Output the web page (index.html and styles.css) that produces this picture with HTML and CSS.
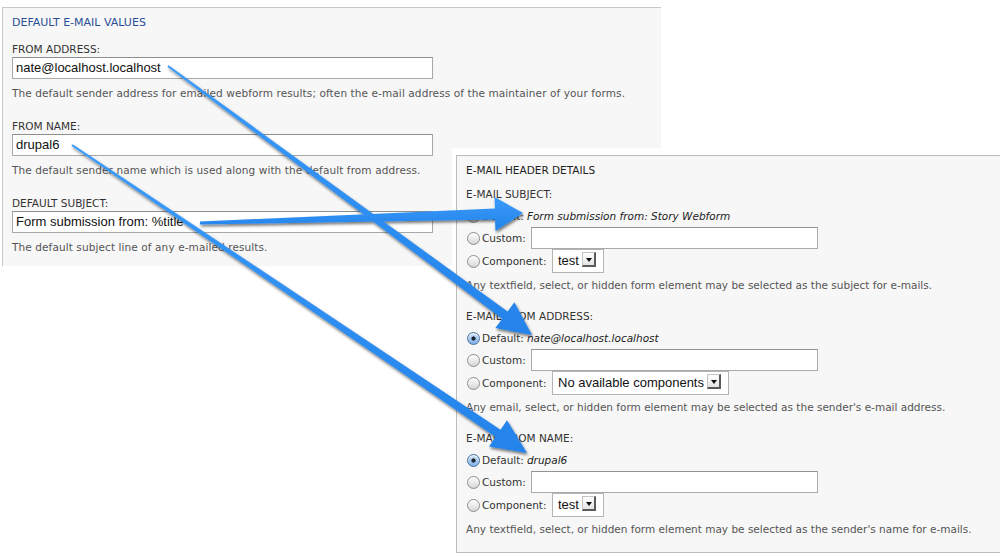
FILE: index.html
```html
<!DOCTYPE html>
<html>
<head>
<meta charset="utf-8">
<title>Webform e-mail settings</title>
<link rel="stylesheet" href="styles.css">
</head>
<body>
<div class="canvas">
  <div class="panel-left">
    <div class="legend">DEFAULT E-MAIL VALUES</div>
    <div class="field">
      <div class="lbl">FROM ADDRESS:</div>
      <div class="input">nate@localhost.localhost</div>
      <div class="desc">The default sender address for emailed webform results; often the e-mail address of the maintainer of your forms.</div>
    </div>
    <div class="field">
      <div class="lbl">FROM NAME:</div>
      <div class="input">drupal6</div>
      <div class="desc">The default sender name which is used along with the default from address.</div>
    </div>
    <div class="field">
      <div class="lbl">DEFAULT SUBJECT:</div>
      <div class="input">Form submission from: %title</div>
      <div class="desc">The default subject line of any e-mailed results.</div>
    </div>
  </div>

  <div class="shot-right">
    <div class="panel-right">
      <div class="rlegend">E-MAIL HEADER DETAILS</div>

      <div class="group">
        <div class="rlbl">E-MAIL SUBJECT:</div>
        <div class="row def"><span class="radio"></span><span>Default:</span><span class="val">Form submission from: Story Webform</span></div>
        <div class="row cus"><span class="radio"></span><span class="rl rl-custom">Custom:</span><span class="rinput"></span></div>
        <div class="row com"><span class="radio"></span><span class="rl rl-comp">Component:</span><span class="select"><span class="stext">test</span><span class="sbtn"></span></span></div>
        <div class="rdesc">Any textfield, select, or hidden form element may be selected as the subject for e-mails.</div>
      </div>

      <div class="group">
        <div class="rlbl">E-MAIL FROM ADDRESS:</div>
        <div class="row def"><span class="radio on"></span><span>Default:</span><span class="val">nate@localhost.localhost</span></div>
        <div class="row cus"><span class="radio"></span><span class="rl rl-custom">Custom:</span><span class="rinput"></span></div>
        <div class="row com"><span class="radio"></span><span class="rl rl-comp">Component:</span><span class="select"><span class="stext">No available components</span><span class="sbtn"></span></span></div>
        <div class="rdesc">Any email, select, or hidden form element may be selected as the sender's e-mail address.</div>
      </div>

      <div class="group">
        <div class="rlbl">E-MAIL FROM NAME:</div>
        <div class="row def"><span class="radio on"></span><span>Default:</span><span class="val">drupal6</span></div>
        <div class="row cus"><span class="radio"></span><span class="rl rl-custom">Custom:</span><span class="rinput"></span></div>
        <div class="row com"><span class="radio"></span><span class="rl rl-comp">Component:</span><span class="select"><span class="stext">test</span><span class="sbtn"></span></span></div>
        <div class="rdesc">Any textfield, select, or hidden form element may be selected as the sender's name for e-mails.</div>
      </div>
    </div>
  </div>

  <svg class="arrows" width="1000" height="557" viewBox="0 0 1000 557" xmlns="http://www.w3.org/2000/svg">
    <defs>
      <filter id="sh" x="-10%" y="-10%" width="130%" height="130%">
        <feDropShadow dx="1" dy="2" stdDeviation="1.6" flood-color="#000" flood-opacity="0.55"/>
      </filter>
      <linearGradient id="bl" x1="0" y1="0" x2="0" y2="1">
        <stop offset="0" stop-color="#3a9bfa"/>
        <stop offset="1" stop-color="#2483ea"/>
      </linearGradient>
    </defs>
    <g filter="url(#sh)" fill="url(#bl)">
      <polygon points="168.6,65.2 507.6,311.6 514.4,302.3 532,335 495.4,328.1 502.2,318.8 167.4,66.8"/>
      <polygon points="72.6,144.2 500.5,429.7 507,420.2 527,453 489,446.6 495.5,437.1 71.4,145.8"/>
      <polygon points="200,221.5 495,208.5 494.5,197 523,213 495.5,231 495,219.5 200,224.5"/>
    </g>
  </svg>
</div>
</body>
</html>
```

FILE: styles.css
```css
html, body {
  margin: 0;
  padding: 0;
  background: #ffffff;
}

.canvas {
  position: relative;
  width: 1000px;
  height: 557px;
  overflow: hidden;
  font-family: "DejaVu Sans", "Noto Sans", sans-serif;
  font-size: 10.5px;
  color: #333333;
}

/* left screenshot */
.panel-left {
  position: absolute;
  left: 2px;
  top: 7px;
  width: 659px;
  height: 259px;
  box-sizing: border-box;
  border-top: 1px solid #c8c8c8;
  border-left: 1px solid #c8c8c8;
  background: #f7f7f7;
  padding: 8px 0 0 9px;
}

.legend {
  font-size: 11px;
  line-height: 14px;
  height: 14px;
  color: #2b4f96;
}

.field {
  margin-top: 17px;
}
.legend + .field {
  margin-top: 10px;
}

.lbl {
  line-height: 14px;
  height: 14px;
  padding-top: 2px;
  color: #333333;
}

.input {
  margin-top: 1px;
  width: 421px;
  height: 22px;
  box-sizing: border-box;
  border: 1px solid #a8a8a8;
  border-top-color: #8e8e8e;
  background: #ffffff;
  font-family: "Liberation Sans", Arial, sans-serif;
  font-size: 13px;
  line-height: 20px;
  padding-left: 3px;
  color: #111111;
}

.desc {
  margin-top: 7px;
  line-height: 14px;
  height: 14px;
  color: #555555;
  letter-spacing: 0.1px;
  white-space: nowrap;
}

/* right screenshot */
.shot-right {
  position: absolute;
  left: 452px;
  top: 148px;
  width: 560px;
  box-sizing: border-box;
  padding: 7px 0 4px 4px;
  background: #ffffff;
}

.panel-right {
  height: 398px;
  box-sizing: border-box;
  border: 1px solid #bdbdbd;
  border-right: none;
  background: #f7f7f7;
  padding: 7px 0 0 9px;
}

.rlegend {
  line-height: 14px;
  height: 14px;
  color: #222222;
}

.rlbl {
  line-height: 14px;
  height: 14px;
  color: #333333;
}

.group {
  margin-top: 17px;
}
.rlegend + .group {
  margin-top: 10px;
}

.row {
  display: flex;
  align-items: center;
  white-space: nowrap;
  color: #333333;
}
.row.def {
  margin-top: 6px;
  height: 18px;
}
.row.cus {
  margin-top: 2px;
  height: 22px;
}
.row.com {
  height: 24px;
}

.radio {
  flex: none;
  width: 13px;
  height: 13px;
  box-sizing: border-box;
  border-radius: 50%;
  border: 1px solid #8c8c8c;
  background: linear-gradient(#fefefe, #d6d6d6);
  box-shadow: inset 0 1px 1px rgba(255,255,255,0.9);
  margin-left: 1px;
  margin-right: 2px;
}
.radio.on {
  border-color: #4a6e9a;
  background:
    radial-gradient(circle, #1d2530 0 1.8px, transparent 2.4px),
    linear-gradient(#cfe4fb, #7fb0e8);
}

.val {
  font-style: italic;
  margin-left: 3px;
  color: #222222;
}

.rl-custom {
  width: 49px;
}
.rl-comp {
  width: 70px;
}

.rinput {
  width: 287px;
  height: 22px;
  box-sizing: border-box;
  border: 1px solid #aaaaaa;
  border-top-color: #929292;
  background: #ffffff;
}

.select {
  display: flex;
  align-items: flex-start;
  height: 24px;
  box-sizing: border-box;
  border: 1px solid #b4b4b4;
  background: #ffffff;
  padding: 0 7px 0 5px;
  font-family: "Liberation Sans", Arial, sans-serif;
  font-size: 13px;
  color: #111111;
}
.stext {
  line-height: 22px;
  margin-right: 3px;
}
.sbtn {
  position: relative;
  margin-top: 2px;
  width: 14px;
  height: 15px;
  box-sizing: border-box;
  border: 1px solid #c4c4c4;
  border-right: 2px solid #5a5a5a;
  border-bottom: 2px solid #5a5a5a;
  background: linear-gradient(#ffffff, #e4e4e4);
}
.sbtn::after {
  content: "";
  position: absolute;
  left: 3px;
  top: 5px;
  border-left: 3px solid transparent;
  border-right: 3px solid transparent;
  border-top: 4px solid #111111;
}

.rdesc {
  margin-top: 5px;
  line-height: 14px;
  height: 14px;
  color: #555555;
  white-space: nowrap;
}

/* annotation arrows overlay */
.arrows {
  position: absolute;
  left: 0;
  top: 0;
  pointer-events: none;
}
```
